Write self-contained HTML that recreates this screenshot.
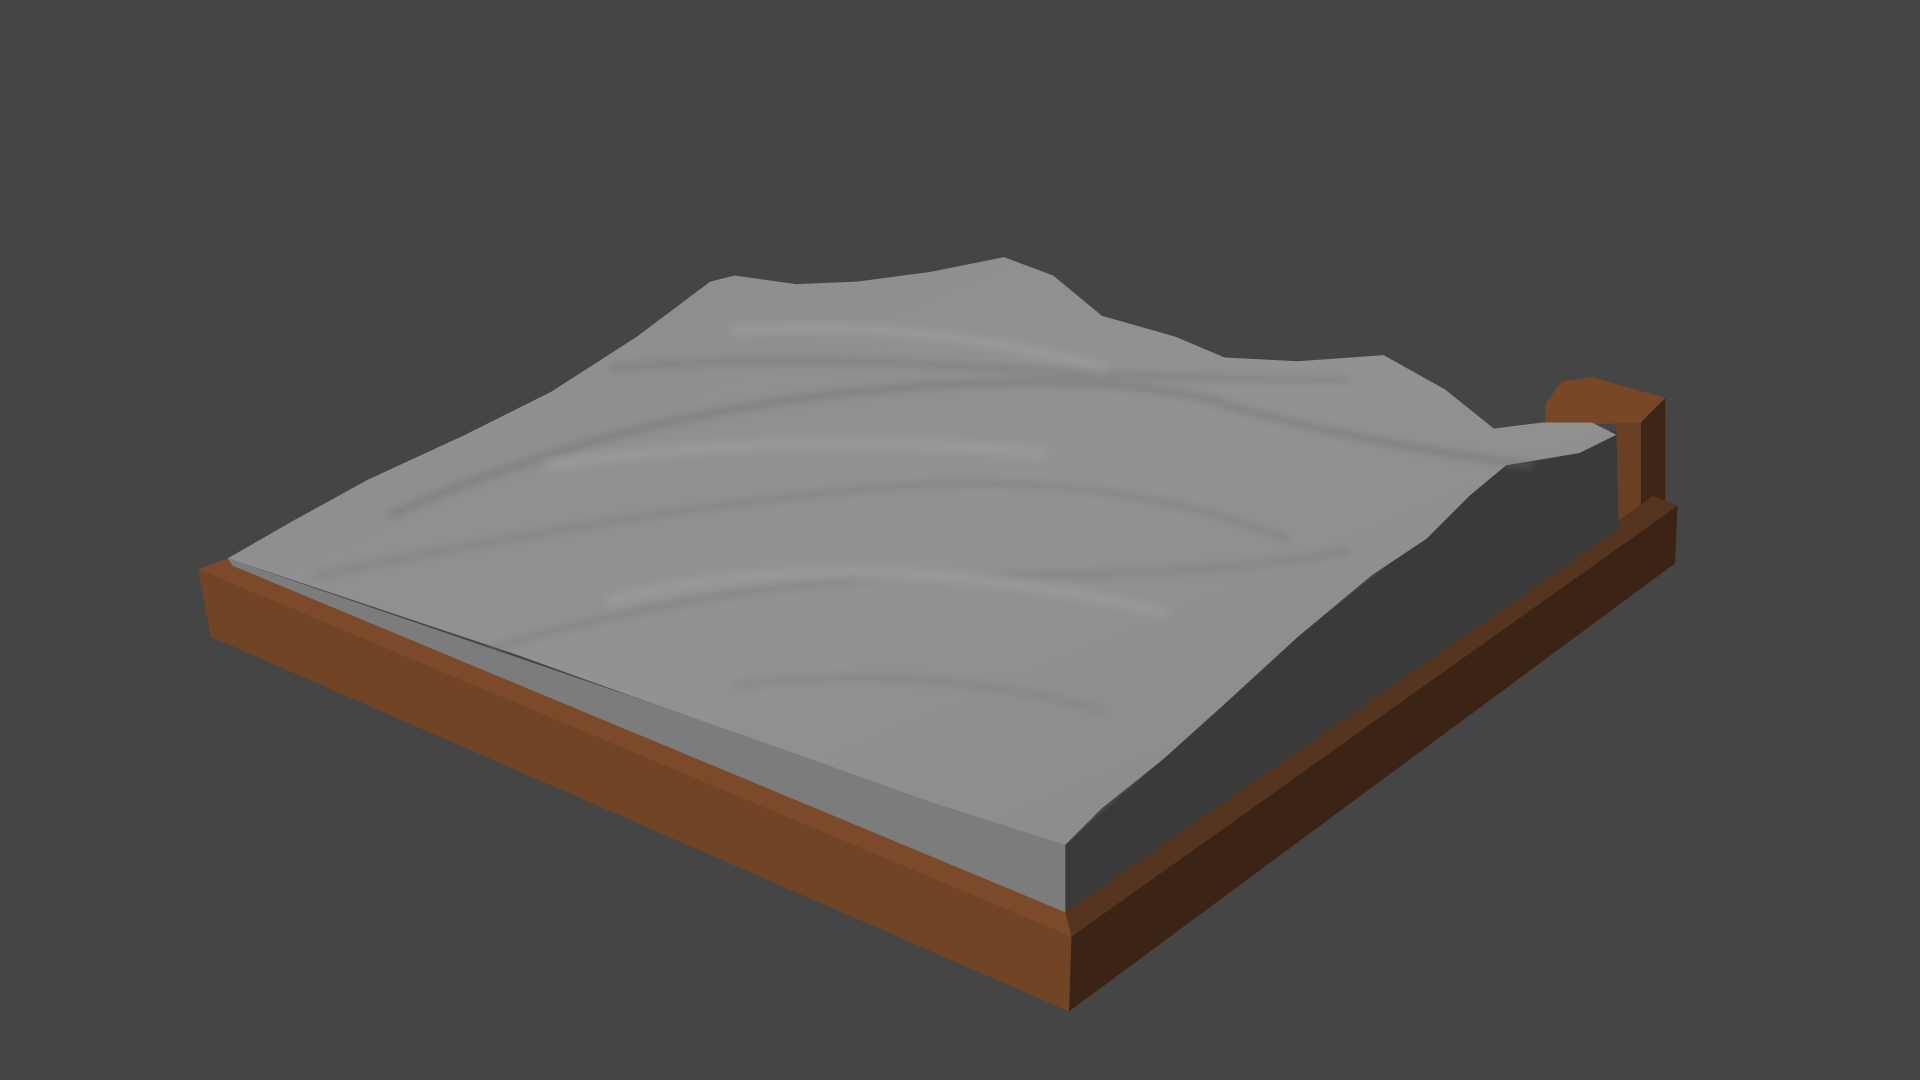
<!DOCTYPE html>
<html><head><meta charset="utf-8"><style>
html,body{margin:0;padding:0;background:#454545;width:1920px;height:1080px;overflow:hidden}
svg{display:block}
</style></head><body>
<svg width="1920" height="1080" viewBox="0 0 1568 882" preserveAspectRatio="none">
<defs>
<linearGradient id="tg" x1="0" y1="0" x2="1" y2="1">
<stop offset="0" stop-color="#8c8c8c"/><stop offset="0.5" stop-color="#929292"/><stop offset="1" stop-color="#898989"/>
</linearGradient>
<filter id="bl"><feGaussianBlur stdDeviation="3"/></filter>
</defs>
<rect width="1568" height="882" fill="#454545"/>
<!-- back post -->
<polygon points="1262,330 1275,312 1300,308 1360,325 1340,345 1262,348" fill="#774728"/>
<polygon points="1340,345 1360,325 1360,412 1340,430" fill="#3d2517"/>
<polygon points="1320,345 1340,345 1340,430 1320,440" fill="#6a4024"/>
<!-- frame right side -->
<polygon points="875,765 1355,408 1370,413 1368,460 873,826" fill="#3b2416"/>
<!-- frame top strip -->
<polygon points="162,465 186,456 872,745 875,765" fill="#7c4a2a"/>
<polygon points="870,745 1350,405 1370,413 875,765" fill="#553520"/>
<!-- frame front -->
<polygon points="162,465 875,765 873,826 172,520" fill="#714426"/>
<!-- terrain right dark face -->
<polygon points="870,690 950,620 1060,520 1160,440 1230,360 1320,352 1322,432 870,745" fill="#3a3a3a"/>
<!-- terrain front grey face -->
<polygon points="186,456 870,690 870,745 190,462" fill="#7b7c7c"/>
<!-- terrain top -->
<polygon points="186,456 240,425 300,392 380,355 450,320 520,275 580,230 600,225 650,232 700,230 760,222 820,210 860,225 900,258 960,275 1000,292 1060,295 1130,290 1180,318 1220,350 1260,345 1300,345 1320,355 1290,370 1230,380 1200,405 1165,440 1120,470 1060,520 1000,575 950,620 900,660 870,690 760,655 640,612 520,570 420,534 300,494" fill="url(#tg)"/>
<g filter="url(#bl)" opacity="0.45" fill="none" stroke-linecap="round">
<path d="M320,420 Q500,340 700,320 T1000,330 T1250,380" stroke="#6e6e6e" stroke-width="6"/>
<path d="M260,470 Q500,420 700,400 T1050,440" stroke="#777" stroke-width="5"/>
<path d="M400,530 Q600,470 800,470 T1100,450" stroke="#777" stroke-width="5"/>
<path d="M500,300 Q650,290 800,300 T1100,310" stroke="#707070" stroke-width="5"/>
<path d="M600,560 Q750,540 900,580" stroke="#7a7a7a" stroke-width="5"/>
<path d="M600,270 Q750,260 900,300" stroke="#a6a6a6" stroke-width="8"/>
<path d="M450,380 Q650,350 850,370" stroke="#a4a4a4" stroke-width="10"/>
<path d="M500,490 Q700,440 950,500" stroke="#a2a2a2" stroke-width="10"/>
</g>
</svg>
</body></html>
